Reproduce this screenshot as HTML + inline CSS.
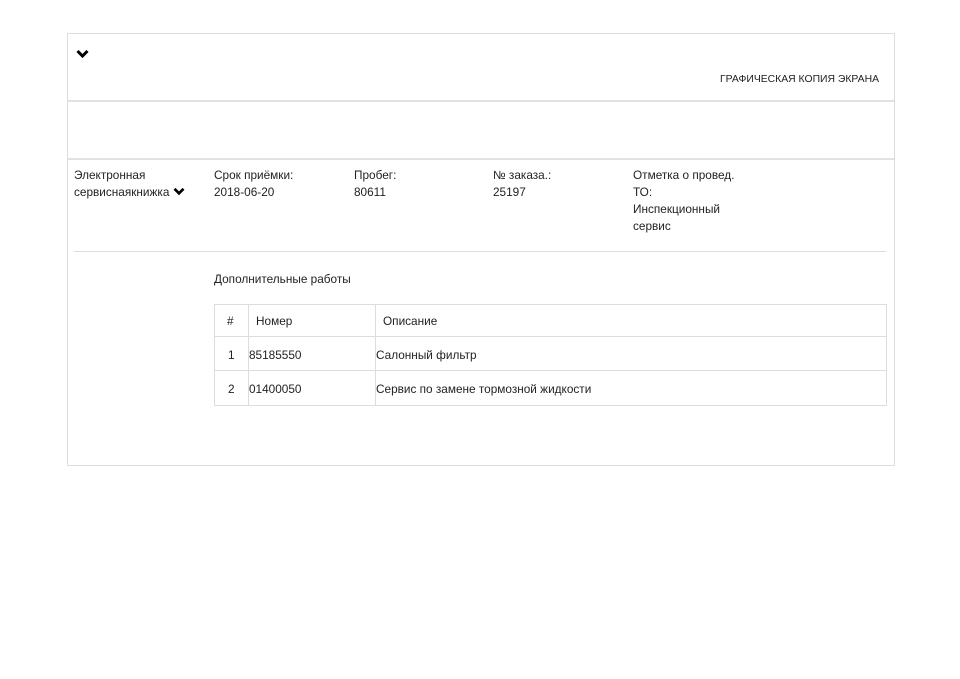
<!DOCTYPE html>
<html><head><meta charset="utf-8"><style>
body{margin:0;width:960px;height:679px;background:#fff;font-family:"Liberation Sans",sans-serif;font-size:11.8px;color:#222;position:relative;overflow:hidden}
.a{position:absolute}
.box{left:67px;top:33px;width:826px;height:431px;border:1px solid #ddd}
.hl{height:1px;background:#ddd}
.t{position:absolute;line-height:17px;letter-spacing:0}
.vl{width:1px;background:#ddd}
</style></head><body>
<div class="a box"></div>
<div class="a hl" style="left:67px;top:100px;width:827px;height:2px;background:#e2e2e2"></div>
<div class="a hl" style="left:67px;top:158px;width:827px;height:2px;background:#e2e2e2"></div>
<div class="a hl" style="left:74px;top:251px;width:812px"></div>
<svg class="a" style="left:76px;top:49px" width="13" height="10" viewBox="0 0 13 10"><path d="M1.5 2 L6.5 7 L11.5 2" stroke="#000" stroke-width="3" fill="none"/></svg>
<div class="t" style="left:720px;top:71px;font-size:10.4px">ГРАФИЧЕСКАЯ КОПИЯ ЭКРАНА</div>
<div class="t" style="left:74px;top:167px">Электронная<br>сервиснаякнижка <svg width="12" height="9" viewBox="0 0 13 10"><path d="M1.5 2 L6.5 7 L11.5 2" stroke="#000" stroke-width="3" fill="none"/></svg></div>
<div class="t" style="left:214px;top:167px">Срок приёмки:<br>2018-06-20</div>
<div class="t" style="left:354px;top:167px">Пробег:<br>80611</div>
<div class="t" style="left:493px;top:167px">№ заказа.:<br>25197</div>
<div class="t" style="left:633px;top:167px">Отметка о провед.<br>ТО:<br>Инспекционный<br>сервис</div>
<div class="t" style="left:214px;top:271px">Дополнительные работы</div>
<div class="a" style="left:214px;top:304px;width:671px;height:100px;border:1px solid #ddd"></div>
<div class="a hl" style="left:214px;top:336px;width:672px"></div>
<div class="a hl" style="left:214px;top:370px;width:672px"></div>
<div class="a vl" style="left:248px;top:304px;height:101px"></div>
<div class="a vl" style="left:375px;top:304px;height:101px"></div>
<div class="t" style="left:227px;top:313px">#</div>
<div class="t" style="left:256px;top:313px">Номер</div>
<div class="t" style="left:383px;top:313px">Описание</div>
<div class="t" style="left:228px;top:347px">1</div>
<div class="t" style="left:249px;top:347px">85185550</div>
<div class="t" style="left:376px;top:347px">Салонный фильтр</div>
<div class="t" style="left:228px;top:381px">2</div>
<div class="t" style="left:249px;top:381px">01400050</div>
<div class="t" style="left:376px;top:381px">Сервис по замене тормозной жидкости</div>
</body></html>
